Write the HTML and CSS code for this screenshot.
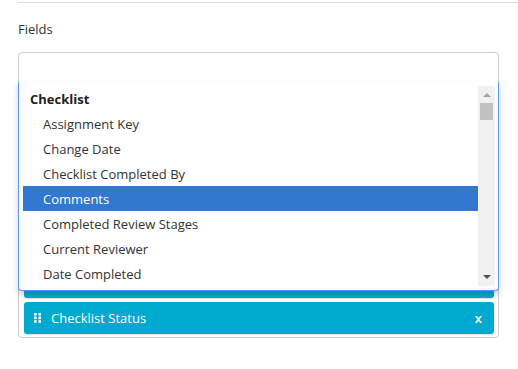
FILE: index.html
```html
<!DOCTYPE html>
<html>
<head>
<meta charset="utf-8">
<link rel="stylesheet" href="styles.css">
</head>
<body>
<div class="page">
  <div class="rule"></div>
  <div class="label">Fields</div>
  <div class="field">
    <div class="picker">
      <div class="search"></div>
      <div class="chosen">
        <div class="chip"></div>
        <div class="chip"></div>
        <div class="chip"><span class="grip"><svg width="7" height="10" viewBox="0 0 7 10"><g fill="#fff"><rect x="0" y="0" width="2.6" height="2.6"/><rect x="4.4" y="0" width="2.6" height="2.6"/><rect x="0" y="3.6" width="2.6" height="2.6"/><rect x="4.4" y="3.6" width="2.6" height="2.6"/><rect x="0" y="7.2" width="2.6" height="2.6"/><rect x="4.4" y="7.2" width="2.6" height="2.6"/></g></svg></span><span class="chip-text">Checklist Status</span><span class="chip-x">x</span></div>
      </div>
    </div>

    <div class="dropdown">
      <div class="list">
        <div class="options">
          <div class="group">Checklist</div>
          <div class="opt">Assignment Key</div>
          <div class="opt">Change Date</div>
          <div class="opt">Checklist Completed By</div>
          <div class="opt active">Comments</div>
          <div class="opt">Completed Review Stages</div>
          <div class="opt">Current Reviewer</div>
          <div class="opt">Date Completed</div>
        </div>
        <div class="scrollbar">
          <div class="arrow up"></div>
          <div class="thumb"></div>
          <div class="track"></div>
          <div class="arrow down"></div>
        </div>
      </div>
    </div>
  </div>
</div>
</body>
</html>
```

FILE: styles.css
```css
* { box-sizing: border-box; }
html, body { margin: 0; padding: 0; background: #fff; }
body {
  font-family: "Open Sans", "Liberation Sans", sans-serif;
  font-size: 13px;
  color: #333;
  width: 518px;
  height: 369px;
  overflow: hidden;
}
.page { padding-top: 2px; padding-left: 18px; }
.rule { border-top: 1px solid #ddd; height: 0; }
.label {
  margin-top: 17px;
  height: 18px;
  line-height: 18px;
  color: #333;
}
.field { position: relative; margin-top: 14px; width: 481px; }
.picker {
  height: 286px;
  border: 1px solid #ccc;
  border-radius: 4px;
  display: flex;
  flex-direction: column;
  overflow: hidden;
}
.search { height: 31px; flex: none; }
.chosen {
  flex: 1;
  display: flex;
  flex-direction: column;
  justify-content: flex-end;
  gap: 4px;
  padding: 0 4px 3px 5px;
  overflow: hidden;
}
.chip {
  flex: none;
  height: 32px;
  background: #00aacf;
  border-radius: 3px;
  color: #fff;
  display: flex;
  align-items: center;
  padding: 0 12px 0 10px;
  box-shadow: 0 1px 1px rgba(0, 0, 0, 0.12);
}
.grip { display: flex; width: 7px; height: 10px; margin-right: 10px; margin-top: -1px; }
.chip-text { flex: 1; font-size: 13px; }
.chip-x { font-size: 13px; font-weight: 600; }

.dropdown {
  position: absolute;
  top: 30px;
  left: 0;
  width: 481px;
  height: 209px;
  background: #fff;
  border: 1px solid #5897fb;
  border-top: none;
  border-radius: 0 0 4px 4px;
  box-shadow: 0 4px 6px rgba(0, 0, 0, 0.18);
  padding: 4px 3px 3px 4px;
}
.list { display: flex; height: 200px; }
.options { flex: 1; overflow: hidden; }
.group {
  height: 25px;
  padding-top: 2px;
  line-height: 23px;
  padding-left: 7px;
  font-weight: 700;
  color: #222;
}
.opt {
  height: 25px;
  padding-top: 2px;
  line-height: 23px;
  padding-left: 20px;
}
.opt.active { background: #3277d0; color: #fff; }
.scrollbar {
  width: 17px;
  background: #f1f1f1;
  display: flex;
  flex-direction: column;
  align-items: center;
}
.arrow { width: 0; height: 0; border-left: 4px solid transparent; border-right: 4px solid transparent; }
.arrow.up { border-bottom: 4px solid #a3a3a3; margin-top: 7px; }
.arrow.down { border-top: 4px solid #505050; margin-bottom: 7px; }
.thumb { width: 13px; height: 17px; background: #c1c1c1; margin-top: 6px; }
.track { flex: 1; }
```
